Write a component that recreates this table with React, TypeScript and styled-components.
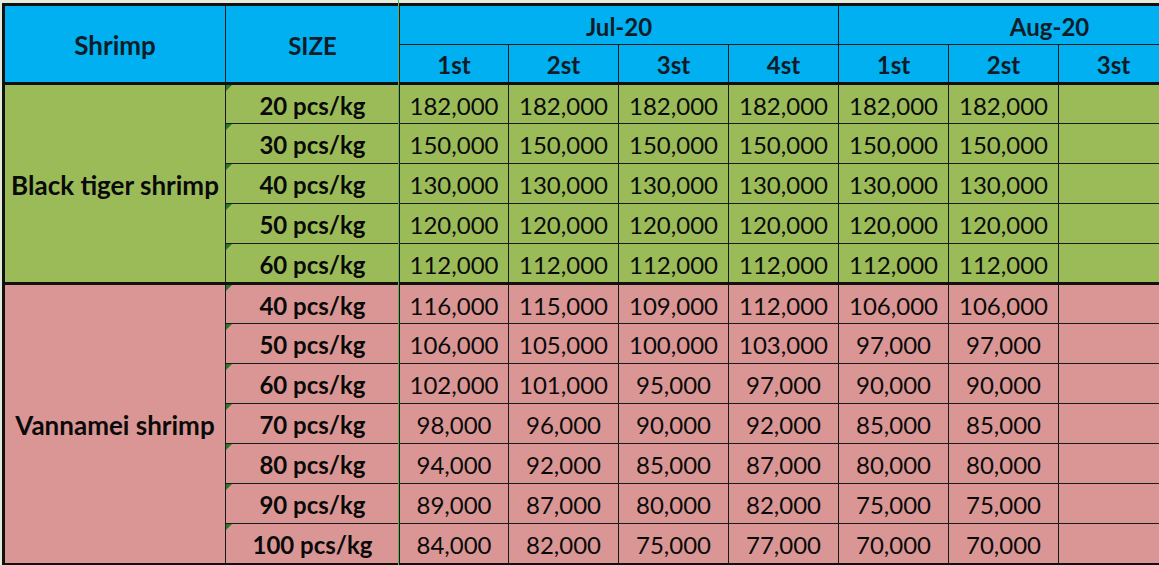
import React from 'react'
import styled, { createGlobalStyle } from 'styled-components'

type Fill = 'green' | 'pink' | 'blank'

const fills: Record<Fill, string> = {
  green: '#9bbb59',
  pink: '#da9694',
  blank: '#e3ecda',
}

const groups: { name: string; fill: Fill; rows: { size: string; prices: string[] }[] }[] = [
  {
    name: 'Black tiger shrimp',
    fill: 'green',
    rows: [
      { size: '20 pcs/kg', prices: ['182,000', '182,000', '182,000', '182,000', '182,000', '182,000'] },
      { size: '30 pcs/kg', prices: ['150,000', '150,000', '150,000', '150,000', '150,000', '150,000'] },
      { size: '40 pcs/kg', prices: ['130,000', '130,000', '130,000', '130,000', '130,000', '130,000'] },
      { size: '50 pcs/kg', prices: ['120,000', '120,000', '120,000', '120,000', '120,000', '120,000'] },
      { size: '60 pcs/kg', prices: ['112,000', '112,000', '112,000', '112,000', '112,000', '112,000'] },
    ],
  },
  {
    name: 'Vannamei shrimp',
    fill: 'pink',
    rows: [
      { size: '40 pcs/kg', prices: ['116,000', '115,000', '109,000', '112,000', '106,000', '106,000'] },
      { size: '50 pcs/kg', prices: ['106,000', '105,000', '100,000', '103,000', '97,000', '97,000'] },
      { size: '60 pcs/kg', prices: ['102,000', '101,000', '95,000', '97,000', '90,000', '90,000'] },
      { size: '70 pcs/kg', prices: ['98,000', '96,000', '90,000', '92,000', '85,000', '85,000'] },
      { size: '80 pcs/kg', prices: ['94,000', '92,000', '85,000', '87,000', '80,000', '80,000'] },
      { size: '90 pcs/kg', prices: ['89,000', '87,000', '80,000', '82,000', '75,000', '75,000'] },
      { size: '100 pcs/kg', prices: ['84,000', '82,000', '75,000', '77,000', '70,000', '70,000'] },
    ],
  },
]

const colWidths = [222, 174, 109, 110, 110, 110, 110, 110, 110, 92]

export default function App() {
  return (
    <>
      <GlobalStyle />
      <Sheet>
        <Table>
          <colgroup>
            {colWidths.map((w, i) => (
              <col key={i} style={{ width: w }} />
            ))}
          </colgroup>
          <thead>
            <HeadRow $h={40}>
              <HeadCell rowSpan={2}>
                <Wide>Shrimp</Wide>
              </HeadCell>
              <HeadCell rowSpan={2}>SIZE</HeadCell>
              <HeadCell colSpan={4}>Jul-20</HeadCell>
              <HeadCell colSpan={4}>Aug-20</HeadCell>
            </HeadRow>
            <HeadRow $h={39}>
              <HeadCell>1st</HeadCell>
              <HeadCell>2st</HeadCell>
              <HeadCell>3st</HeadCell>
              <HeadCell>4st</HeadCell>
              <HeadCell>1st</HeadCell>
              <HeadCell>2st</HeadCell>
              <HeadCell>3st</HeadCell>
              <HeadCell />
            </HeadRow>
          </thead>
          {groups.map((g) => (
            <Group key={g.name}>
              {g.rows.map((r, i) => (
                <Row key={r.size}>
                  {i === 0 && (
                    <NameCell rowSpan={g.rows.length} $fill={g.fill}>
                      {g.name}
                    </NameCell>
                  )}
                  <SizeCell $fill={g.fill}>{r.size}</SizeCell>
                  {r.prices.map((p, j) => (
                    <Cell key={j} $fill={g.fill}>
                      {p}
                    </Cell>
                  ))}
                  <Cell $fill={g.fill} />
                  <Cell $fill={g.fill} />
                </Row>
              ))}
            </Group>
          ))}
          <tbody>
            <Row>
              <Cell $fill="blank" />
              <Cell $fill="blank" />
            </Row>
          </tbody>
        </Table>
        <FreezeLine />
      </Sheet>
    </>
  )
}

const GlobalStyle = createGlobalStyle`
  html, body {
    margin: 0;
    padding: 0;
    background: #e3ecda;
    overflow: hidden;
  }
  body {
    font-family: Lato, 'Open Sans', sans-serif;
  }
`

const Sheet = styled.div`
  position: relative;
  width: 1159px;
  height: 565px;
  overflow: hidden;
  padding: 3px 0 0 2px;
  box-sizing: border-box;
`

const FreezeLine = styled.div`
  position: absolute;
  left: 398px;
  top: 0;
  bottom: 0;
  width: 1px;
  background: #63ad52;
`

const Table = styled.table`
  border-collapse: collapse;
  table-layout: fixed;
  width: 1257px;
  font-size: 24px;
  color: #0a0a0a;
  border-top: 3px solid #111;
  border-left: 3px solid #111;
`

const HeadRow = styled.tr<{ $h: number }>`
  height: ${(p) => p.$h}px;
`

const HeadCell = styled.th`
  background: #00b0f0;
  color: #101c28;
  font-weight: 700;
  text-align: center;
  vertical-align: middle;
  padding: 2px 0 0;
  border: 1px solid #1a1a1a;
  white-space: nowrap;
`

const Wide = styled.span`
  font-size: 26px;
`

const Group = styled.tbody`
  border-top: 3px solid #111;
  border-bottom: 2px solid #111;
`

const Row = styled.tr`
  height: 40px;
`

const Cell = styled.td<{ $fill: Fill }>`
  background: ${(p) => fills[p.$fill]};
  border: 1px solid #1a1a1a;
  text-align: center;
  vertical-align: middle;
  padding: 2px 0 0;
  white-space: nowrap;
`

const NameCell = styled(Cell)`
  font-weight: 700;
  font-size: 26px;
  padding: 2px 0 0;
`

const SizeCell = styled(Cell)`
  position: relative;
  font-weight: 700;

  &::before {
    content: '';
    position: absolute;
    left: 0;
    top: 0;
    border-top: 6px solid #2b7a2b;
    border-right: 6px solid transparent;
  }
`
